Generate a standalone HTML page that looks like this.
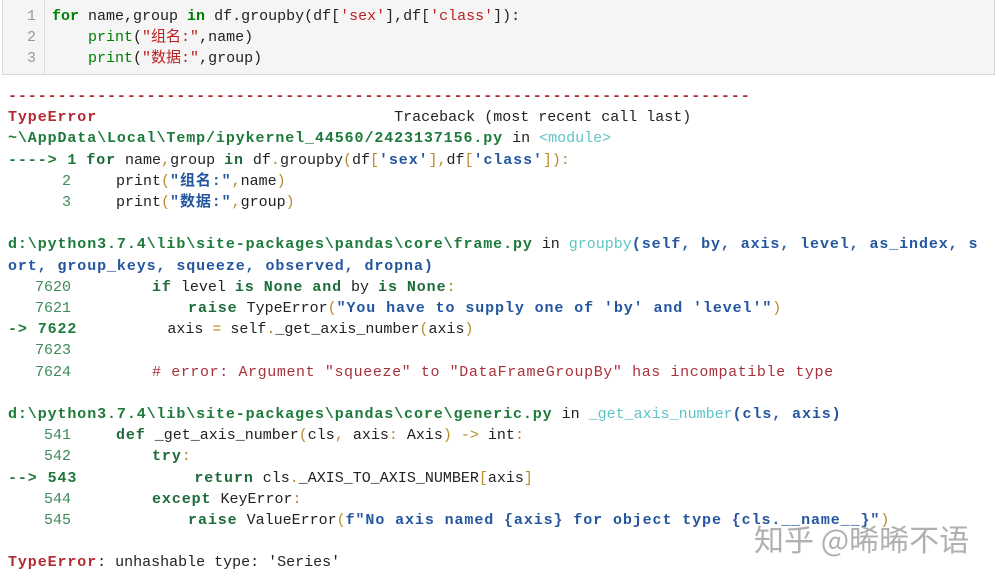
<!DOCTYPE html>
<html><head><meta charset="utf-8"><style>
body{margin:0;width:995px;height:580px;background:#fff;overflow:hidden;position:relative;font-family:"Liberation Mono","Noto Sans CJK SC",monospace;}
pre{margin:0;font-family:inherit;font-size:15px;white-space:pre;}
.cell{position:absolute;left:2px;top:0;width:991px;height:74px;background:#f5f5f5;border:1px solid #d8d8d8;border-top:none;}
.gut{position:absolute;left:0;top:0;width:41px;height:74px;border-right:1px solid #ddd;}
.ln{position:absolute;left:0;top:6px;width:33px;text-align:right;color:#999;line-height:21px;font-size:15px;}
.code{position:absolute;left:49px;top:6px;line-height:21px;color:#222;}
.k{color:#008000;font-weight:bold}
.s{color:#ba2121}
.b{color:#008000}
.out{position:absolute;left:8px;top:86px;line-height:21.2px;color:#222;}
.r,.g,.gb,.bl{letter-spacing:0.9px}
.r{color:#b22b31;font-weight:bold}
.g{color:#1d7a3a;font-weight:bold}
.n{color:#3e8a5c}
.gb{color:#1d6b3a;font-weight:bold}
.c{color:#5fc3c6}
.bl{color:#2456a0;font-weight:bold}
.p{color:#b88a2a}
.cm{color:#a8323a;letter-spacing:0.6px}
.wm{position:absolute;left:754px;top:516px;font-family:"Noto Sans CJK SC",sans-serif;font-size:30px;color:rgba(150,150,150,0.75);}
</style></head><body>
<div class="cell"><div class="gut"><div class="ln">1<br>2<br>3</div></div>
<pre class="code"><span class="k">for</span> name,group <span class="k">in</span> df.groupby(df[<span class="s">'sex'</span>],df[<span class="s">'class'</span>]):
    <span class="b">print</span>(<span class="s">"组名:"</span>,name)
    <span class="b">print</span>(<span class="s">"数据:"</span>,group)</pre></div>
<pre class="out"><span class="r">---------------------------------------------------------------------------</span>
<span class="r">TypeError</span>                                 Traceback (most recent call last)
<span class="g">~\AppData\Local\Temp/ipykernel_44560/2423137156.py</span> in <span class="c">&lt;module&gt;</span>
<span class="g">----&gt; 1</span> <span class="gb">for</span> name<span class="p">,</span>group <span class="gb">in</span> df<span class="p">.</span>groupby<span class="p">(</span>df<span class="p">[</span><span class="bl">'sex'</span><span class="p">],</span>df<span class="p">[</span><span class="bl">'class'</span><span class="p">]):</span>
<span class="n">      2</span>     print<span class="p">(</span><span class="bl">"组名:"</span><span class="p">,</span>name<span class="p">)</span>
<span class="n">      3</span>     print<span class="p">(</span><span class="bl">"数据:"</span><span class="p">,</span>group<span class="p">)</span>

<span class="g">d:\python3.7.4\lib\site-packages\pandas\core\frame.py</span> in <span class="c">groupby</span><span class="bl">(self, by, axis, level, as_index, s</span>
<span class="bl">ort, group_keys, squeeze, observed, dropna)</span>
<span class="n">   7620</span>         <span class="gb">if</span> level <span class="gb">is</span> <span class="gb">None</span> <span class="gb">and</span> by <span class="gb">is</span> <span class="gb">None</span><span class="p">:</span>
<span class="n">   7621</span>             <span class="gb">raise</span> TypeError<span class="p">(</span><span class="bl">"You have to supply one of 'by' and 'level'"</span><span class="p">)</span>
<span class="g">-&gt; 7622</span>          axis <span class="p">=</span> self<span class="p">.</span>_get_axis_number<span class="p">(</span>axis<span class="p">)</span>
<span class="n">   7623</span>
<span class="n">   7624</span>         <span class="cm"># error: Argument "squeeze" to "DataFrameGroupBy" has incompatible type</span>

<span class="g">d:\python3.7.4\lib\site-packages\pandas\core\generic.py</span> in <span class="c">_get_axis_number</span><span class="bl">(cls, axis)</span>
<span class="n">    541</span>     <span class="gb">def</span> _get_axis_number<span class="p">(</span>cls<span class="p">,</span> axis<span class="p">:</span> Axis<span class="p">)</span> <span class="p">-&gt;</span> int<span class="p">:</span>
<span class="n">    542</span>         <span class="gb">try</span><span class="p">:</span>
<span class="g">--&gt; 543</span>             <span class="gb">return</span> cls<span class="p">.</span>_AXIS_TO_AXIS_NUMBER<span class="p">[</span>axis<span class="p">]</span>
<span class="n">    544</span>         <span class="gb">except</span> KeyError<span class="p">:</span>
<span class="n">    545</span>             <span class="gb">raise</span> ValueError<span class="p">(</span><span class="bl">f"No axis named {axis} for object type {cls.__name__}"</span><span class="p">)</span>

<span class="r">TypeError</span>: unhashable type: 'Series'</pre>
<div class="wm">知乎 @晞晞不语</div>
</body></html>
